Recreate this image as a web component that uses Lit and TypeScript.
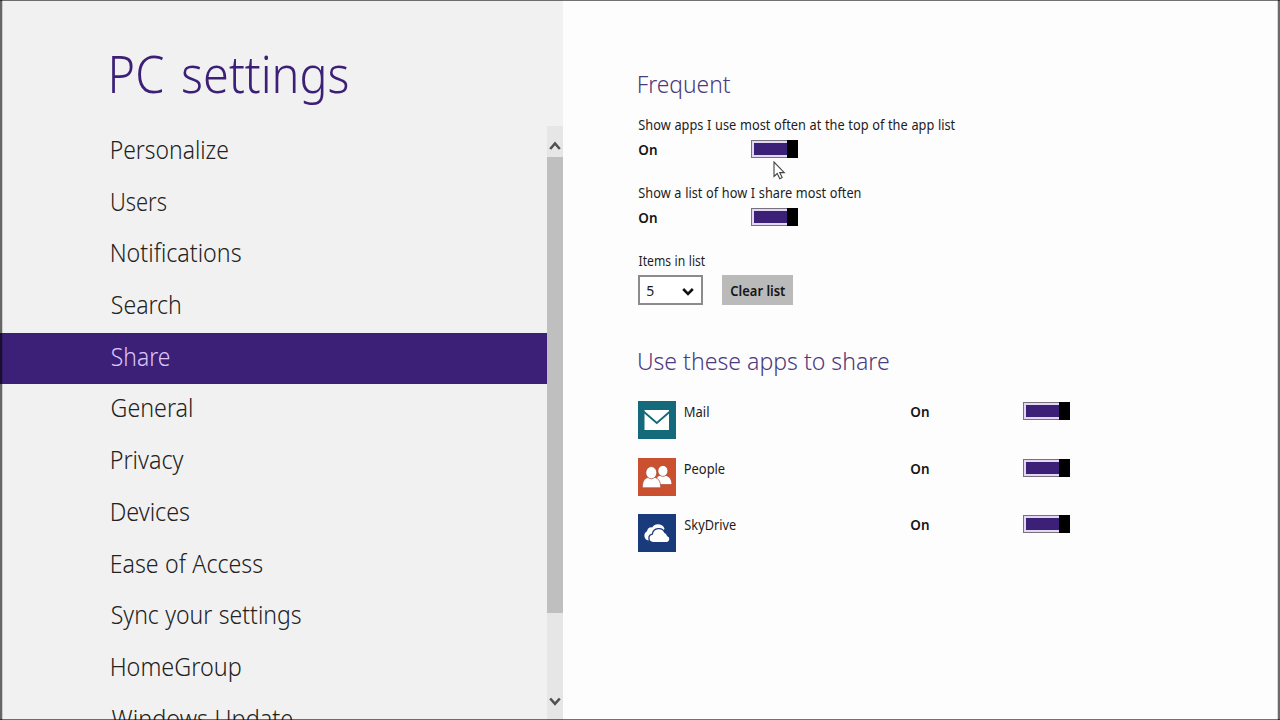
import { LitElement, html, css, svg } from "lit";
import { customElement, property, state } from "lit/decorators.js";
import { styleMap } from "lit/directives/style-map.js";

/** One line of text condensed or expanded so that its glyphs span `span` pixels. */
@customElement("fit-text")
class FitText extends LitElement {
  @property() text = "";
  @property({ type: Number }) span = 0;
  @state() private stretch = 1;
  @state() private shift = 0;

  static styles = css`
    :host { display: block; white-space: nowrap; }
    .line { display: block; width: max-content; transform-origin: 0 0; }
  `;

  firstUpdated() {
    const cs = getComputedStyle(this);
    const scale = 10;
    const ctx = document.createElement("canvas").getContext("2d")!;
    ctx.font = `${cs.fontWeight} ${parseFloat(cs.fontSize) * scale}px ${cs.fontFamily}`;
    const m = ctx.measureText(this.text);
    const gaps = (this.text.split(" ").length - 1) * (parseFloat(cs.wordSpacing) || 0);
    const ink = (m.actualBoundingBoxLeft + m.actualBoundingBoxRight) / scale + gaps;
    this.stretch = this.span / ink;
    this.shift = (m.actualBoundingBoxLeft / scale) * this.stretch;
  }

  render() {
    return html`<span class="line" style=${styleMap({
      transform: `translateX(${this.shift.toFixed(2)}px) scaleX(${this.stretch.toFixed(4)})`,
    })}>${this.text}</span>`;
  }
}

@customElement("toggle-switch")
class ToggleSwitch extends LitElement {
  static styles = css`
    :host { display: block; width: 47px; height: 18px; }
    .track {
      box-sizing: border-box; width: 47px; height: 18px; display: flex;
      border: 1px solid #77717f; border-right: 0; background: #e3d8f2;
    }
    .fill { flex: 1; margin: 2px 0 2px 2px; background: #3c2077; }
    .thumb { width: 11px; margin: -1px 0; background: #000; }
  `;
  render() {
    return html`<div class="track"><div class="fill"></div><div class="thumb"></div></div>`;
  }
}

const NAV: [string, number][] = [
  ["Personalize", 115.5], ["Users", 54], ["Notifications", 128.5], ["Search", 68],
  ["Share", 57], ["General", 79.5], ["Privacy", 71.5], ["Devices", 77],
  ["Ease of Access", 150], ["Sync your settings", 188.5], ["HomeGroup", 128.5],
  ["Windows Update", 180],
];

const mailIcon = svg`<svg class="glyph" viewBox="0 0 38 38">
  <path fill="#fff" d="M6.500 9H31v20H6.500z"/>
  <path fill="none" stroke="#14697a" stroke-width="1.900" d="M5.500 10.500L18.800 22L32 10.500"/></svg>`;

const peopleIcon = svg`<svg class="glyph" viewBox="0 0 38 38">
  <g fill="#fff" stroke="#a8452b" stroke-width=".7">
  <path d="M17 26.600c0-6.600 2.500-9.600 7.900-9.600s9 3.400 9 9.600z"/>
  <ellipse cx="24.900" cy="12.900" rx="5" ry="5.500"/>
  <path d="M4.300 29.800c0-7.600 2.800-10.700 9.100-10.700s9.300 3.100 9.300 10.700z"/>
  <ellipse cx="13.300" cy="14.700" rx="5.500" ry="6.100"/></g></svg>`;

const cloudIcon = svg`<svg class="glyph" viewBox="0 0 38 38">
  <path fill="#fff" d="M10.500 26.500a5 5 0 0 1-1.500-9.300a4.800 4.800 0 0 1 5.200-3.800a7 7 0 0 1 12.300 1.200l-4 9z"/>
  <path fill="#fff" stroke="#193b7b" stroke-width="1.300" d="M15 28.600a4.300 4.300 0 0 1-.7-8.500a6.600 6.600 0 0 1 12.500-1.600a4.900 4.900 0 0 1 2.700 3.200a3.600 3.600 0 0 1-.3 6.900z"/></svg>`;

const APPS = [
  { name: "Mail", span: 23.5, tone: "mail", icon: mailIcon },
  { name: "People", span: 39.5, tone: "people", icon: peopleIcon },
  { name: "SkyDrive", span: 50.5, tone: "sky", icon: cloudIcon },
];

@customElement("app-root")
class AppRoot extends LitElement {
  static styles = css`
    :host {
      display: block; position: relative; width: 1280px; height: 720px; overflow: hidden;
      font-family: "Noto Sans", "Open Sans", sans-serif; font-size: 14px; color: #1c1c1c;
      background: #fefdfe;
    }
    .page { display: grid; grid-template-columns: 563px 1fr; height: 720px; }
    .side { background: #f1f1f1; display: grid; grid-template-rows: 126px 594px; overflow: hidden; }
    .title {
      padding: 42px 0 0 111.500px; font-size: 50.500px; line-height: 64px; font-weight: 300; color: #3c2077;
      word-spacing: 5px;
    }
    .body { display: grid; grid-template-columns: 547px 16px; overflow: hidden; }
    .nav { overflow: hidden; }
    .item {
      box-sizing: border-box; height: 51.7px; padding-left: 112px;
      font-size: 25px; line-height: 47px; font-weight: 300; color: #222; word-spacing: .5px;
    }
    .item.active { background: #3c2077; color: #dcc6fa; }
    .bar { background: #e6e6e6; display: flex; flex-direction: column; align-items: center; }
    .arrow { display: block; width: 16px; height: 31px; flex: none; }
    .thumb { width: 16px; height: 456px; background: #bfbfbf; }
    .arrow.down { margin-top: auto; }
    .main { padding: 67px 0 0 75px; }
    .heading { height: 32px; font-size: 24px; line-height: 34px; font-weight: 300; color: #4b3a7c; padding-left: .8px; }
    .heading.second { margin-top: 42px; }
    .label { height: 20px; line-height: 20px; padding-left: .6px; word-spacing: .4px; }
    .setting { padding-top: 16px; height: 51.800px; }
    .line { display: grid; grid-template-columns: 113px 47px; padding-top: 5px; }
    .on { height: 18px; font-weight: 600; line-height: 19px; color: #151515; padding-left: .7px; }
    .controls { display: flex; gap: 19px; padding-top: 4.500px; }
    .select {
      box-sizing: border-box; width: 65px; height: 30px; border: 2px solid #8b8b8b; background: #fff;
      display: flex; justify-content: space-between; padding: 0 7px 0 7px; line-height: 27px;
    }
    .chev { width: 12px; height: 26px; margin-top: 1px; }
    .button {
      box-sizing: border-box; width: 71px; height: 30px; padding-left: 8.600px; background: #bababa;
      font-weight: 600; line-height: 32px; color: #151515;
    }
    .apps { display: flex; flex-direction: column; gap: 18.400px; padding-top: 25px; }
    .app { display: grid; grid-template-columns: 47px 225px 113px 47px; height: 38px; }
    .app .label { line-height: 22px; padding-left: .2px; }
    .app .on { line-height: 22px; }
    .app toggle-switch { margin-top: 1px; }
    .tile { width: 38px; height: 38px; box-sizing: border-box; }
    .tile.mail { background: #14697a; }
    .tile.people { background: #ca5030; }
    .tile.sky { background: #193b7b; }
    .glyph { display: block; width: 38px; height: 38px; }
    .frame {
      position: absolute; inset: 0; pointer-events: none;
      box-shadow: inset 2px 0 rgba(0,0,0,.5), inset 3px 0 rgba(0,0,0,.15),
        inset -2px 0 rgba(0,0,0,.5), inset -3px 0 rgba(0,0,0,.15),
        inset 0 1px rgba(0,0,0,.55), inset 0 -1px rgba(0,0,0,.55);
    }
    .pointer { position: absolute; left: 773px; top: 161px; width: 13px; height: 20px; }
  `;

  render() {
    return html`
      <div class="page">
        <div class="side">
          <fit-text class="title" text="PC settings" span="236"></fit-text>
          <div class="body">
            <div class="nav">
              ${NAV.map(([t, w]) => html`<fit-text class="item ${t === "Share" ? "active" : ""}" text=${t} span=${w}></fit-text>`)}
            </div>
            <div class="bar">
              <svg class="arrow" viewBox="0 0 16 31"><path fill="none" stroke="#505050" stroke-width="2.600" d="M3.200 23L8 17.500l4.800 5.500"/></svg>
              <div class="thumb"></div>
              <svg class="arrow down" viewBox="0 0 16 31"><path fill="none" stroke="#505050" stroke-width="2.600" d="M3.200 9.500L8 14.800l4.800-5.300"/></svg>
            </div>
          </div>
        </div>
        <div class="main">
          <fit-text class="heading" text="Frequent" span="91"></fit-text>
          <div class="setting">
            <fit-text class="label" text="Show apps I use most often at the top of the app list" span="316"></fit-text>
            <div class="line"><fit-text class="on" text="On" span="17.5"></fit-text><toggle-switch></toggle-switch></div>
          </div>
          <div class="setting">
            <fit-text class="label" text="Show a list of how I share most often" span="221.5"></fit-text>
            <div class="line"><fit-text class="on" text="On" span="17.5"></fit-text><toggle-switch></toggle-switch></div>
          </div>
          <div class="setting">
            <fit-text class="label" text="Items in list" span="66"></fit-text>
            <div class="controls">
              <div class="select">
                <fit-text text="5" span="6.5"></fit-text>
                <svg class="chev" viewBox="0 0 12 26"><path fill="none" stroke="#111" stroke-width="2.600" d="M1.200 11L6 15.800l4.800-4.800"/></svg>
              </div>
              <fit-text class="button" text="Clear list" span="54"></fit-text>
            </div>
          </div>
          <fit-text class="heading second" text="Use these apps to share" span="249.5"></fit-text>
          <div class="apps">
            ${APPS.map((a) => html`<div class="app">
              <div class="tile ${a.tone}">${a.icon}</div>
              <fit-text class="label" text=${a.name} span=${a.span}></fit-text>
              <fit-text class="on" text="On" span="17.5"></fit-text>
              <toggle-switch></toggle-switch>
            </div>`)}
          </div>
        </div>
      </div>
      <div class="frame"></div>
      <svg class="pointer" viewBox="0 0 13 20"><path fill="#fff" stroke="#444" stroke-width="1.100" d="M1 1v14.500l3.200-3 2.600 5.300 2.400-1.200-2.500-5h4.600z"/></svg>
    `;
  }
}
